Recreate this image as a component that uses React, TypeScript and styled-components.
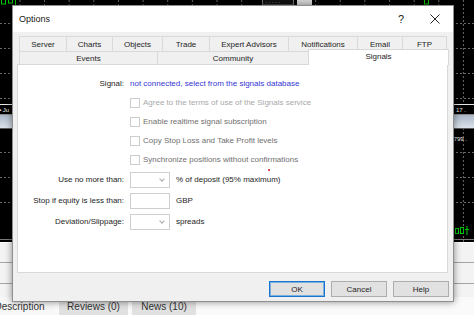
import styled, { createGlobalStyle } from 'styled-components'

const GlobalStyle = createGlobalStyle`
  html, body {
    margin: 0;
    padding: 0;
    background: #000;
    overflow: hidden;
  }
  body {
    font-family: 'Liberation Sans', Arial, sans-serif;
  }
`

const topTabs: [string, number][] = [
  ['Server', 47],
  ['Charts', 46],
  ['Objects', 50],
  ['Trade', 47],
  ['Expert Advisors', 79],
  ['Notifications', 69],
  ['Email', 45],
  ['FTP', 45],
]

const lowerTabs: [string, number, boolean][] = [
  ['Events', 138, false],
  ['Community', 151, false],
  ['Signals', 141, true],
]

const checkRows = [
  { text: 'Agree to the terms of use of the Signals service', faint: true },
  { text: 'Enable realtime signal subscription', faint: false },
  { text: 'Copy Stop Loss and Take Profit levels', faint: false },
  { text: 'Synchronize positions without confirmations', faint: false },
]

const ChartDrawing = () => (
  <svg width={474} height={242} viewBox="0 0 474 242">
    <defs>
      <pattern id="vgrid" x="19.4" y="0" width="24.64" height="4" patternUnits="userSpaceOnUse">
        <rect x="0" y="0" width="1" height="2" fill="#6a6a6a" />
      </pattern>
      <pattern id="hdots" x="0" y="0" width="4" height="1" patternUnits="userSpaceOnUse">
        <rect width="2" height="1" fill="#6a6a6a" />
      </pattern>
      <linearGradient id="band" x1="0" y1="0" x2="0" y2="1">
        <stop offset="0" stopColor="#aab6c6" />
        <stop offset="1" stopColor="#dbe2ea" />
      </linearGradient>
    </defs>
    <rect width="474" height="242" fill="#000" />
    <rect x="0" y="0" width="474" height="104" fill="url(#vgrid)" />
    <rect x="0" y="129" width="474" height="113" fill="url(#vgrid)" />
    {[23, 48, 73, 98, 152, 177, 202].map((y) => (
      <rect key={y} x="0" y={y} width="474" height="1" fill="url(#hdots)" />
    ))}

    {/* top pane candles and labels */}
    <g stroke="#00c800" fill="none" strokeWidth="1">
      <rect x="1.5" y="-2" width="4" height="6" />
      <rect x="8.5" y="-3" width="4" height="6" />
      <line x1="15.5" y1="0" x2="15.5" y2="5" />
      <rect x="424.5" y="-3" width="4" height="7" />
    </g>
    <rect x="262.5" y="-1" width="31" height="6" fill="#111" stroke="#777" />
    <text x="266" y="3.5" fontSize="5" fill="#ddd" fontFamily="Liberation Sans, Arial, sans-serif">· · · · ·</text>
    <rect x="297" y="-1" width="15" height="7" fill="#d6d6d6" />

    {/* time axis separator */}
    <rect x="0" y="104" width="474" height="1" fill="#e6e6e6" />
    <text x="-1" y="112" fontSize="6" fill="#f0f0f0" fontFamily="Liberation Sans, Arial, sans-serif">
      ▪ Ju
    </text>
    <text x="456" y="112" fontSize="6" fill="#f0f0f0" fontFamily="Liberation Sans, Arial, sans-serif">
      17 .
    </text>
    <rect x="0" y="114" width="474" height="1" fill="#8a8a8a" />
    <rect x="0" y="115" width="474" height="13" fill="url(#band)" />
    <rect x="0" y="128" width="474" height="1" fill="#5c5c5c" />

    {/* lower pane */}
    <text x="452" y="141" fontSize="6" fill="#f0f0f0" fontFamily="Liberation Sans, Arial, sans-serif">
      .799 .
    </text>
    <g stroke="#00c800" fill="none" strokeWidth="1">
      <rect x="455.5" y="228.5" width="3" height="5" />
      <rect x="460.5" y="227.5" width="3" height="6" />
      <line x1="467" y1="226" x2="467" y2="235" />
      <line x1="465" y1="229.5" x2="469" y2="229.5" />
    </g>
    <rect x="0" y="239" width="474" height="1" fill="#7a7a7a" />
  </svg>
)

const CloseIcon = () => (
  <svg width="10" height="10" viewBox="0 0 10 10">
    <path d="M0.5 0.5 L9.5 9.5 M9.5 0.5 L0.5 9.5" stroke="#222" strokeWidth="1" fill="none" />
  </svg>
)

export default function App() {
  return (
    <Screen>
      <GlobalStyle />
      <ChartArea>
        <ChartDrawing />
      </ChartArea>
      <Terminal>
        <TerminalRow $h={19} />
        <TerminalRow $h={20} />
        <TerminalRow $h={13} />
      </Terminal>
      <BottomTabs>
        <BottomTab $active $w={71}>Description</BottomTab>
        <BottomTab $w={69}>Reviews (0)</BottomTab>
        <BottomTab $w={64}>News (10)</BottomTab>
      </BottomTabs>

      <Dialog>
        <TitleBar>
          <Title>Options</Title>
          <TitleButtons>
            <HelpMark>?</HelpMark>
            <CloseButton>
              <CloseIcon />
            </CloseButton>
          </TitleButtons>
        </TitleBar>

        <Body>
          <TabStrip>
            <TabRow $h={15}>
              {topTabs.map(([label, w]) => (
                <Tab key={label} $w={w}>
                  {label}
                </Tab>
              ))}
            </TabRow>
            <TabRow $h={13}>
              {lowerTabs.map(([label, w, selected]) => (
                <Tab key={label} $w={w} $selected={selected}>
                  {label}
                </Tab>
              ))}
            </TabRow>
          </TabStrip>

          <Panel>
            <Row $h={19}>
              <Label>Signal:</Label>
              <Link>not connected, select from the signals database</Link>
            </Row>
            {checkRows.map((r) => (
              <Row key={r.text} $h={19}>
                <Label />
                <CheckBox />
                <CheckText $faint={r.faint}>{r.text}</CheckText>
              </Row>
            ))}
            <Row $h={21}>
              <Label>Use no more than:</Label>
              <Field>
                <Chevron />
              </Field>
              <Suffix>% of deposit (95% maximum)</Suffix>
            </Row>
            <Row $h={21}>
              <Label>Stop if equity is less than:</Label>
              <Field />
              <Suffix>GBP</Suffix>
            </Row>
            <Row $h={21}>
              <Label>Deviation/Slippage:</Label>
              <Field>
                <Chevron />
              </Field>
              <Suffix>spreads</Suffix>
            </Row>
            <RedDot />
          </Panel>

          <ButtonRow>
            <Button $primary>OK</Button>
            <Button>Cancel</Button>
            <Button>Help</Button>
          </ButtonRow>
        </Body>
      </Dialog>
    </Screen>
  )
}

const Screen = styled.div`
  position: relative;
  width: 474px;
  height: 315px;
  overflow: hidden;
  background: #000;
  display: flex;
  flex-direction: column;
`

const ChartArea = styled.div`
  height: 242px;
  flex: none;

  svg {
    display: block;
  }
`

const Terminal = styled.div`
  flex: none;
  height: 55px;
  background: #f0f0f0;
  border-top: 1px solid #fff;
  box-sizing: border-box;
`

const TerminalRow = styled.div<{ $h: number }>`
  height: ${(p) => p.$h}px;
  border-bottom: 1px solid #a4a4a4;
  background: #f3f3f3;
`

const BottomTabs = styled.div`
  flex: 1;
  display: flex;
  gap: 4px;
  margin-left: -16px;
  background: #fafafa;
`

const BottomTab = styled.div<{ $w: number; $active?: boolean }>`
  width: ${(p) => p.$w}px;
  flex: none;
  overflow: hidden;
  display: flex;
  align-items: center;
  justify-content: center;
  box-sizing: border-box;
  font-size: 10px;
  color: #333;
  background: ${(p) => (p.$active ? '#f7f7f7' : '#e1e1e1')};
  white-space: nowrap;
`

const Dialog = styled.div`
  position: absolute;
  left: 12px;
  top: 5px;
  width: 442px;
  height: 297px;
  box-sizing: border-box;
  border: 1px solid #8f8f8f;
  background: #f0f0f0;
  box-shadow: 0 0 7px rgba(0, 0, 0, 0.45);
  display: flex;
  flex-direction: column;
`

const TitleBar = styled.div`
  height: 26px;
  flex: none;
  background: #fff;
  display: flex;
  align-items: center;
  justify-content: space-between;
  padding-left: 6px;
`

const Title = styled.div`
  font-size: 9px;
  color: #1a1a1a;
`

const TitleButtons = styled.div`
  display: flex;
  align-items: center;
  height: 100%;
`

const HelpMark = styled.div`
  width: 34px;
  text-align: center;
  font-size: 11px;
  color: #222;
`

const CloseButton = styled.div`
  width: 34px;
  height: 100%;
  display: flex;
  align-items: center;
  justify-content: center;
  margin-right: 1px;
`

const Body = styled.div`
  flex: 1;
  display: flex;
  flex-direction: column;
  padding: 4px 5px 0 4px;
`

const TabStrip = styled.div`
  margin-left: 2px;
  display: flex;
  flex-direction: column;
`

const TabRow = styled.div<{ $h: number }>`
  display: flex;
  align-items: flex-start;
  height: ${(p) => p.$h}px;
`

const Tab = styled.div<{ $w: number; $selected?: boolean }>`
  position: relative;
  z-index: ${(p) => (p.$selected ? 1 : 0)};
  width: ${(p) => p.$w}px;
  height: ${(p) => (p.$selected ? 'calc(100% + 3px)' : '100%')};
  margin-top: ${(p) => (p.$selected ? '-2px' : '0')};
  padding-bottom: ${(p) => (p.$selected ? '3px' : '0')};
  flex: none;
  box-sizing: border-box;
  border-top: 1px solid #d9d9d9;
  border-left: 1px solid #d9d9d9;
  background: ${(p) => (p.$selected ? '#fff' : '#f0f0f0')};
  display: flex;
  align-items: center;
  justify-content: center;
  font-size: 8px;
  color: #1e1e1e;
  white-space: nowrap;

  &:last-child {
    border-right: 1px solid #d9d9d9;
  }
`

const Panel = styled.div`
  position: relative;
  height: 209px;
  flex: none;
  box-sizing: border-box;
  background: #fff;
  border: 1px solid #d9d9d9;
  padding-top: 9px;
`

const Row = styled.div<{ $h: number }>`
  height: ${(p) => p.$h}px;
  display: flex;
  align-items: center;
  font-size: 8px;
`

const Label = styled.div`
  width: 106px;
  margin-right: 6px;
  flex: none;
  text-align: right;
  color: #1e1e1e;
`

const Link = styled.div`
  color: #3535d4;
`

const CheckBox = styled.div`
  width: 10px;
  height: 10px;
  box-sizing: border-box;
  border: 1px solid #cdcdcd;
  background: #fff;
  flex: none;
`

const CheckText = styled.div<{ $faint: boolean }>`
  margin-left: 3px;
  color: ${(p) => (p.$faint ? '#a9a9a9' : '#707070')};
`

const Field = styled.div`
  position: relative;
  width: 40px;
  height: 16px;
  box-sizing: border-box;
  border: 1px solid #cfcfcf;
  background: #fff;
  flex: none;
`

const Chevron = styled.div`
  position: absolute;
  right: 5px;
  top: 4px;
  width: 3px;
  height: 3px;
  border-right: 1px solid #a8a8a8;
  border-bottom: 1px solid #a8a8a8;
  transform: rotate(45deg);
`

const Suffix = styled.div`
  margin-left: 6px;
  color: #1e1e1e;
`

const RedDot = styled.div`
  position: absolute;
  left: 250px;
  top: 104px;
  width: 2px;
  height: 2px;
  border-radius: 1px;
  background: #d01818;
`

const ButtonRow = styled.div`
  display: flex;
  justify-content: flex-end;
  gap: 6px;
  margin-top: 8px;
  margin-right: -1px;
`

const Button = styled.div<{ $primary?: boolean }>`
  width: 56px;
  height: 16px;
  box-sizing: border-box;
  border: 1px solid ${(p) => (p.$primary ? '#1a73cc' : '#adadad')};
  box-shadow: ${(p) => (p.$primary ? 'inset 0 0 0 1px rgba(0, 120, 215, 0.45)' : 'none')};
  background: #e1e1e1;
  display: flex;
  align-items: center;
  justify-content: center;
  font-size: 8px;
  color: #1e1e1e;
`
